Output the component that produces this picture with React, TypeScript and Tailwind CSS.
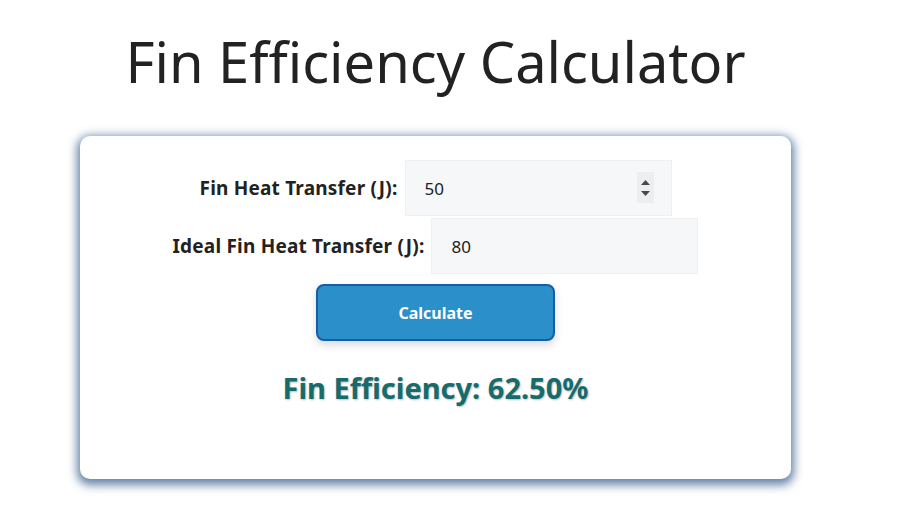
import { useState } from 'react'

function Spinner() {
  return (
    <div className="absolute right-[18px] top-[12px] flex h-[31px] w-[17px] flex-col items-center justify-center gap-[6px] bg-[#eceef0]">
      <svg width="9" height="5" viewBox="0 0 9 5"><path d="M0 5 L4.5 0 L9 5 Z" fill="#4a4a4a" /></svg>
      <svg width="9" height="5" viewBox="0 0 9 5"><path d="M0 0 L4.5 5 L9 0 Z" fill="#4a4a4a" /></svg>
    </div>
  )
}

function Field({ label, value, onChange, spinner }: { label: string; value: string; onChange: (v: string) => void; spinner?: boolean }) {
  return (
    <div className="flex items-center justify-center">
      <label className="mr-[7px] text-[19px] tracking-[0.2px] font-bold text-[#222]">{label}</label>
      <div className="relative">
        <input
          type="text"
          value={value}
          onChange={(e) => onChange(e.target.value)}
          className="h-[56px] w-[267px] border border-[#eef0f2] bg-[#f5f7f9] px-[19px] text-[17px] text-[#222] outline-none"
        />
        {spinner && <Spinner />}
      </div>
    </div>
  )
}

export default function App() {
  const [fin, setFin] = useState('50')
  const [ideal, setIdeal] = useState('80')
  const [result, setResult] = useState('62.50')

  const calc = () => {
    const q = parseFloat(fin)
    const qi = parseFloat(ideal)
    if (!isNaN(q) && !isNaN(qi) && qi !== 0) setResult(((q / qi) * 100).toFixed(2))
  }

  return (
    <div className="min-h-[529px] bg-white font-['Noto_Sans','Open_Sans',sans-serif]">
      <div className="ml-[80px] w-[711px] pt-[22px]">
        <h1 className="text-center text-[56px] leading-[78px] font-normal text-[#222]">Fin Efficiency Calculator</h1>
        <div className="mt-[36px] h-[343px] rounded-[10px] bg-white pt-[24px] shadow-[0_3px_10px_3px_rgba(35,80,130,0.7)]">
          <Field label="Fin Heat Transfer (J):" value={fin} onChange={setFin} spinner />
          <div className="mt-[2px]">
            <Field label="Ideal Fin Heat Transfer (J):" value={ideal} onChange={setIdeal} />
          </div>
          <div className="mt-[10px] flex justify-center">
            <button
              onClick={calc}
              className="h-[57px] w-[239px] rounded-[8px] border-2 border-[#155ea3] bg-[#2b8fca] text-[16px] font-bold text-white shadow-[0_4px_8px_rgba(0,0,0,0.15)]"
            >
              Calculate
            </button>
          </div>
          <div className="mt-[25px] text-center text-[29px] font-bold text-[#186b6b] [text-shadow:1px_1px_2px_rgba(0,0,0,0.25)]">
            Fin Efficiency: {result}%
          </div>
        </div>
      </div>
    </div>
  )
}
